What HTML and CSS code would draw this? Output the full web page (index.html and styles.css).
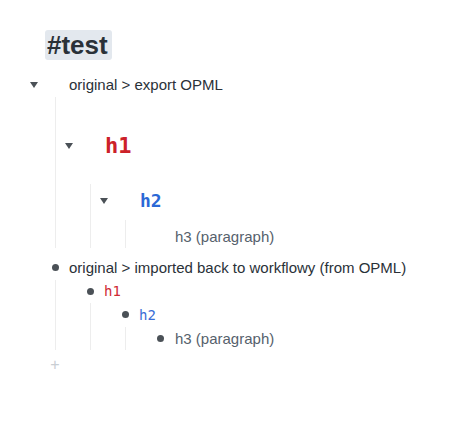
FILE: index.html
```html
<!DOCTYPE html>
<html>
<head>
<meta charset="utf-8">
<link rel="stylesheet" href="styles.css">
</head>
<body>
<div class="page">
  <div class="title"><span class="tag">#test</span></div>

  <div class="item top">
    <div class="row r0">
      <span class="toggle"><span class="tri"></span></span>
      <span class="slot"></span>
      <span class="text">original &gt; export OPML</span>
    </div>
    <div class="children">
      <div class="item">
        <div class="row rh1">
          <span class="toggle"><span class="tri"></span></span>
          <span class="slot"></span>
          <span class="text big-h1">h1</span>
        </div>
        <div class="children">
          <div class="item">
            <div class="row rh2">
              <span class="toggle"><span class="tri"></span></span>
              <span class="slot"></span>
              <span class="text big-h2">h2</span>
            </div>
            <div class="children">
              <div class="item">
                <div class="row rh3">
                  <span class="slot"></span>
                  <span class="text para">h3 (paragraph)</span>
                </div>
              </div>
            </div>
          </div>
        </div>
      </div>
    </div>
  </div>

  <div class="item bottom">
    <div class="row rs">
      <span class="slot"><span class="dot"></span></span>
      <span class="text">original &gt; imported back to workflowy (from OPML)</span>
    </div>
    <div class="children">
      <div class="item">
        <div class="row rs">
          <span class="slot"><span class="dot"></span></span>
          <span class="text small-h1">h1</span>
        </div>
        <div class="children">
          <div class="item">
            <div class="row rs">
              <span class="slot"><span class="dot"></span></span>
              <span class="text small-h2">h2</span>
            </div>
            <div class="children">
              <div class="item">
                <div class="row rs">
                  <span class="slot"><span class="dot"></span></span>
                  <span class="text para">h3 (paragraph)</span>
                </div>
              </div>
            </div>
          </div>
        </div>
      </div>
    </div>
  </div>

  <div class="add"><span class="plus">+</span></div>
</div>
</body>
</html>
```

FILE: styles.css
```css
html, body {
  margin: 0;
  background: #ffffff;
}
body {
  font-family: "Liberation Sans", Arial, sans-serif;
  font-size: 15px;
  color: #2a3138;
}
.page {
  padding: 30px 0 0 41px;
}
.title {
  height: 30px;
  padding-left: 4px;
}
.tag {
  display: inline-block;
  background: #e3e8ee;
  border-radius: 3px;
  padding: 0 4px 0 2px;
  font-weight: bold;
  font-size: 26px;
  line-height: 30px;
  color: #2a3138;
}
.item.top {
  margin-top: 12px;
}
.item.bottom {
  margin-top: 8px;
}
.row {
  display: flex;
  align-items: center;
}
.r0 { height: 24px; padding-bottom: 1px; }
.rh1 { height: 24px; padding: 36px 0 27px; }
.rh2 { height: 24px; padding: 4px 0 8px; }
.rh3 { height: 24px; padding: 4px 0 0; }
.rs { height: 23.5px; }
.toggle {
  width: 14px;
  margin-left: -14px;
  display: flex;
  justify-content: center;
  align-items: center;
}
.tri {
  width: 0;
  height: 0;
  border-left: 4px solid transparent;
  border-right: 4px solid transparent;
  border-top: 6px solid #4b5157;
  margin-top: 1px;
}
.slot {
  width: 28px;
  flex: none;
  display: flex;
  justify-content: center;
  align-items: center;
}
.dot {
  width: 7px;
  height: 7px;
  border-radius: 50%;
  background: #4b5157;
}
.text {
  white-space: nowrap;
}
.children {
  margin-left: 14px;
  border-left: 1px solid #ededed;
  padding-left: 20px;
}
.big-h1 {
  font-family: "DejaVu Sans Mono", monospace;
  font-weight: bold;
  font-size: 22px;
  color: #cc2129;
  margin-left: 1px;
}
.big-h2 {
  font-family: "DejaVu Sans Mono", monospace;
  font-weight: bold;
  font-size: 18px;
  color: #2a68d6;
  margin-left: 1px;
}
.small-h1 {
  font-family: "DejaVu Sans Mono", monospace;
  font-size: 14px;
  color: #cf2a34;
}
.small-h2 {
  font-family: "DejaVu Sans Mono", monospace;
  font-size: 14px;
  color: #3a6dd6;
}
.para {
  color: #56616c;
  margin-left: 1px;
}
.add {
  margin-top: 3px;
  height: 24px;
  width: 28px;
  display: flex;
  justify-content: center;
  align-items: center;
}
.plus {
  color: #c9ced3;
  font-size: 16px;
  font-weight: 300;
}
```
